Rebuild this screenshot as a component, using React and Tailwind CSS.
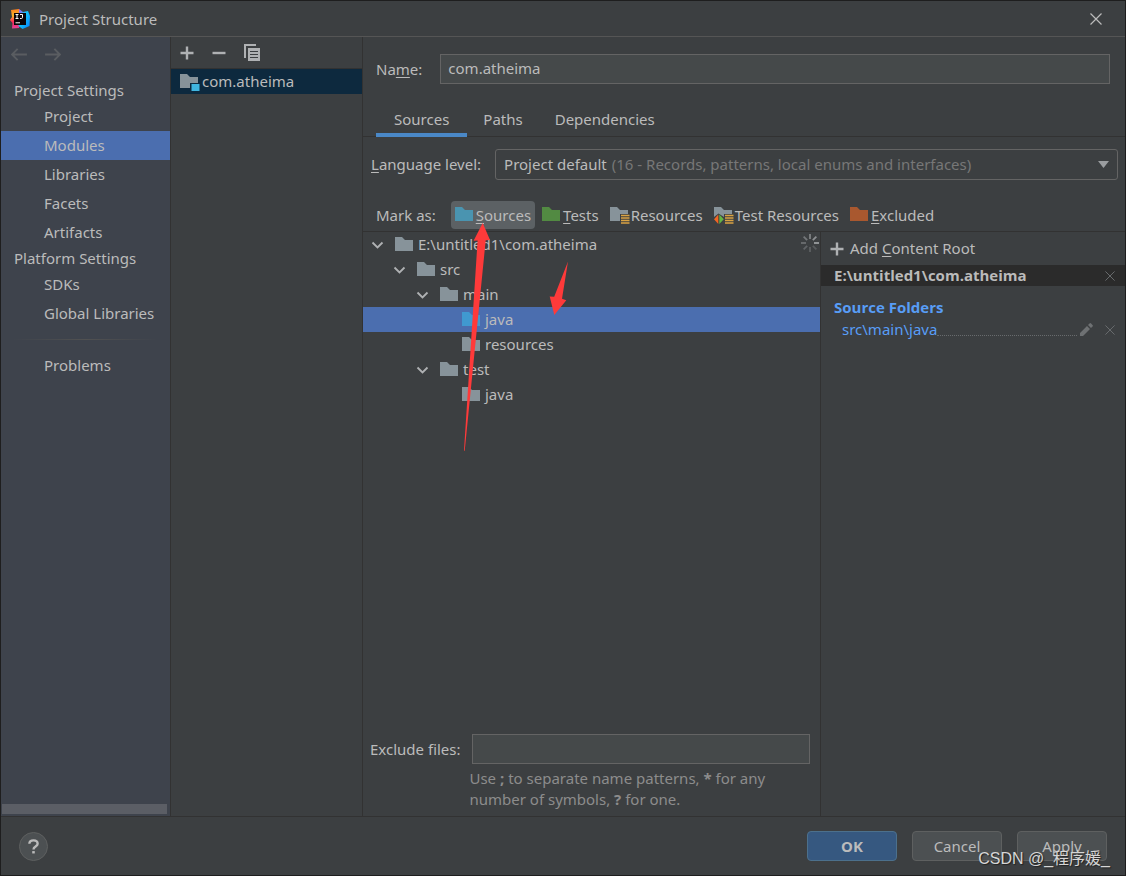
const rows = [
  { depth: 0, label: "E:\\untitled1\\com.atheima", open: true },
  { depth: 1, label: "src", open: true },
  { depth: 2, label: "main", open: true },
  { depth: 3, label: "java", selected: true },
  { depth: 3, label: "resources" },
  { depth: 2, label: "test", open: true },
  { depth: 3, label: "java" },
];

const indents = ["pl-2", "pl-[30px]", "pl-[53px]", "pl-[75px]"];

function Folder({ color = "#87939a", badge }) {
  return (
    <svg width="20" height="18" viewBox="0 0 20 18" className="shrink-0" aria-hidden="true">
      <path d="M0 1h7l3 3h8v11H0z" fill={color} />
      {badge === "module" && (
        <>
          <path d="M10 10h10v8H10z" fill="#0d293e" />
          <path d="M11.500 11h8v7h-8z" fill="#40b6e0" />
        </>
      )}
      {(badge === "resources" || badge === "testResources") && (
        <>
          <path d="M10 8h10v10H10z" fill="#3c3f41" />
          <path d="M11 9.500h8.500M11 12h8.500M11 14.500h8.500M11 17h8.500" stroke="#d9a343" strokeWidth="1.300" />
        </>
      )}
      {badge === "testResources" && (
        <>
          <path d="M0 11 4.500 7.500 10 11v7H0z" fill="#3c3f41" />
          <path d="M4.300 8.500v9.500L0 13.300z" fill="#f26522" />
          <path d="M5.300 8.500v9.500L9.800 13.300z" fill="#62b543" />
        </>
      )}
    </svg>
  );
}

function Plus() {
  return (
    <svg width="14" height="14" viewBox="0 0 14 14" className="shrink-0" aria-hidden="true">
      <path d="M7 .500v13M.500 7h13" stroke="#afb1b3" strokeWidth="2.400" />
    </svg>
  );
}

function Cross({ size = 10, color = "#686b6d" }) {
  return (
    <svg width={size} height={size} viewBox="0 0 12 12" className="shrink-0" aria-hidden="true">
      <path d="M.5.5l11 11M11.500.5l-11 11" stroke={color} strokeWidth="1.200" />
    </svg>
  );
}

function Logo() {
  return (
    <svg width="20" height="20" viewBox="0 0 20 20" aria-hidden="true">
      <defs>
        <linearGradient id="warm" x1="0" y1="0" x2="0" y2="1">
          <stop offset="0" stopColor="#fc801d" />
          <stop offset=".35" stopColor="#fdb62b" />
          <stop offset=".65" stopColor="#fe2857" />
          <stop offset="1" stopColor="#e0409a" />
        </linearGradient>
        <linearGradient id="cool" x1="0" y1="0" x2="1" y2="1">
          <stop offset="0" stopColor="#b74af7" />
          <stop offset=".4" stopColor="#12c8fb" />
          <stop offset="1" stopColor="#087cfa" />
        </linearGradient>
      </defs>
      <path d="M1 1 9 0l3 9-3 10-7 .5L2.500 14 0 11l2-3z" fill="url(#warm)" />
      <path d="M9 0 13 3l5-1 2 5-.5 10-7 3-4-3z" fill="url(#cool)" />
      <path d="M4 4h12v12H4z" fill="#0a0508" />
      <path d="M5.500 5.500h3M7 5.500v4M5.500 9.500h3M10 5.500h2.500V8.500q0 1-1.200 1H10M5.500 13.800h4.500" stroke="#fff" fill="none" />
    </svg>
  );
}

function NavItem({ children, active }) {
  return (
    <a
      href="#"
      aria-current={active ? "page" : undefined}
      className={`flex h-[29px] items-center pl-[43px] ${active ? "bg-[#4b6eaf]" : ""}`}
    >
      {children}
    </a>
  );
}

function MarkButton({ icon, children, active }) {
  return (
    <button type="button" className={`flex h-7 items-center gap-px rounded px-1 whitespace-nowrap ${active ? "bg-[#5c6164]" : ""}`}>
      {icon}
      <span>{children}</span>
    </button>
  );
}

function U({ children }) {
  return <span className="underline decoration-1 underline-offset-2">{children}</span>;
}

function Spinner() {
  const opacities = [0.7, 0.85, 1, 0.3, 0.35, 0.4, 0.5, 0.6];
  return (
    <svg width="18" height="18" viewBox="0 0 18 18" className="shrink-0" aria-hidden="true">
      {opacities.map((o, i) => (
        <path key={i} d="M9 0v5" stroke="#9a9da0" strokeWidth="1.800" opacity={o} transform={`rotate(${i * 45} 9 9)`} />
      ))}
    </svg>
  );
}

export default function App() {
  return (
    <div className="relative flex min-h-screen flex-col border border-[#1e1e1e] bg-[#3c3f41] font-['Noto_Sans','Noto_Sans_CJK_SC',sans-serif] text-[15px] leading-[21px] text-[#bbbbbb]">
      <header className="flex h-9 items-center border-b border-[#555555] pr-[23px] pl-[9px]">
        <Logo />
        <h1 className="flex-1 pt-px pl-[9px]">Project Structure</h1>
        <button type="button" aria-label="Close">
          <Cross size={12} color="#bbbbbb" />
        </button>
      </header>

      <div className="flex flex-1">
        <nav className="flex w-[170px] shrink-0 flex-col border-r border-[#323232] bg-[#3e434c]">
          <div className="flex h-[42px] items-center gap-4 pb-[7px] pl-[10px]">
            {["M17 7H1M7 1 1 7l6 6", "M1 7h16M11 1l6 6-6 6"].map((d, i) => (
              <button key={d} type="button" aria-label={i ? "Forward" : "Back"}>
                <svg width="17" height="13" viewBox="0 0 18 14" aria-hidden="true">
                  <path d={d} fill="none" stroke="#5a5d61" strokeWidth="2" />
                </svg>
              </button>
            ))}
          </div>
          <h2 className="flex h-[23px] items-center pl-[13px]">Project Settings</h2>
          <NavItem>Project</NavItem>
          <NavItem active>Modules</NavItem>
          <NavItem>Libraries</NavItem>
          <NavItem>Facets</NavItem>
          <NavItem>Artifacts</NavItem>
          <h2 className="flex h-[23px] items-center pl-[13px]">Platform Settings</h2>
          <NavItem>SDKs</NavItem>
          <NavItem>Global Libraries</NavItem>
          <div className="mx-3 my-[11px] h-px bg-linear-to-r from-transparent via-[#515151] to-transparent" />
          <NavItem>Problems</NavItem>
          <div className="mt-auto mr-[3px] mb-0.5 ml-px h-[10px] bg-[#5b5e65]" />
        </nav>

        <section className="w-48 shrink-0 border-r border-[#323232]">
          <div className="flex h-8 items-center gap-[18px] border-b border-[#323232] pl-[9px]">
            <button type="button" aria-label="Add"><Plus /></button>
            <button type="button" aria-label="Remove">
              <svg width="14" height="14" viewBox="0 0 14 14" aria-hidden="true">
                <path d="M.500 7h13" stroke="#afb1b3" strokeWidth="2.400" />
              </svg>
            </button>
            <button type="button" aria-label="Copy">
              <svg width="16" height="17" viewBox="0 0 16 17" aria-hidden="true">
                <path d="M1 14V1h11" fill="none" stroke="#afb1b3" strokeWidth="2" />
                <path d="M4 4h12v13H4z" fill="#afb1b3" />
                <path d="M6 7.500h8M6 10.500h8M6 13.500h8" stroke="#3c3f41" strokeWidth="1.200" />
              </svg>
            </button>
          </div>
          <div className="flex h-[25px] items-center gap-0.5 bg-[#0d293e] pl-[9px]">
            <Folder badge="module" />
            <span>com.atheima</span>
          </div>
        </section>

        <main className="flex min-w-0 flex-1 flex-col">
          <div className="flex items-center gap-[18px] pt-[17px] pr-[15px] pl-[13px]">
            <label htmlFor="name">Na<U>m</U>e:</label>
            <input id="name" defaultValue="com.atheima" className="h-[30px] min-w-0 flex-1 border border-[#646464] bg-[#45494a] px-[7px] pb-0.5" />
          </div>

          <div role="tablist" className="mt-[18px] flex h-[35px] border-b border-[#323232] pl-[13px]">
            <button type="button" role="tab" aria-selected="true" className="h-[35px] border-b-4 border-[#4a88c7] px-[18px] pt-[3px]">Sources</button>
            <button type="button" role="tab" aria-selected="false" className="h-[35px] border-b-4 border-transparent px-4 pt-[3px]">Paths</button>
            <button type="button" role="tab" aria-selected="false" className="h-[35px] border-b-4 border-transparent px-4 pt-[3px]">Dependencies</button>
          </div>

          <div className="flex items-center gap-[14px] pt-3 pr-[7px] pl-2">
            <label htmlFor="level"><U>L</U>anguage level:</label>
            <div className="flex h-[31px] min-w-0 flex-1 items-center gap-[5px] rounded-[3px] border border-[#646464] pr-2 pl-2">
              <select id="level" className="field-sizing-content appearance-none bg-transparent">
                <option>Project default</option>
              </select>
              <span className="flex-1 truncate text-[#777777]">(16 - Records, patterns, local enums and interfaces)</span>
              <svg width="11" height="7" viewBox="0 0 11 7" aria-hidden="true"><path d="M0 0h11L5.500 7z" fill="#9a9da0" /></svg>
            </div>
          </div>

          <div className="flex h-[52px] items-end gap-[3px] border-b border-[#323232] pb-0.5 pl-[13px]">
            <span className="mr-3 flex h-7 items-center">Mark as:</span>
            <MarkButton active icon={<Folder color="#4a94b0" />}><U>S</U>ources</MarkButton>
            <MarkButton icon={<Folder color="#528a42" />}><U>T</U>ests</MarkButton>
            <MarkButton icon={<Folder badge="resources" />}>Resources</MarkButton>
            <MarkButton icon={<Folder badge="testResources" />}>Test Resources</MarkButton>
            <MarkButton icon={<Folder color="#a9582f" />}><U>E</U>xcluded</MarkButton>
          </div>

          <div className="flex flex-1">
            <section className="relative flex min-w-0 flex-1 flex-col border-r border-[#323232]">
              <ul role="tree">
                {rows.map((r, i) => (
                  <li
                    key={i}
                    role="treeitem"
                    aria-selected={!!r.selected}
                    className={`flex h-[25px] items-center ${indents[r.depth]} ${r.selected ? "bg-[#4b6eaf]" : ""}`}
                  >
                    <span className="w-6 shrink-0">
                      {r.open && (
                        <svg width="13" height="8" viewBox="0 0 13 8" aria-hidden="true">
                          <path d="M1.500 1.500 6.500 6.500l5-5" fill="none" stroke="#afb1b3" strokeWidth="1.800" />
                        </svg>
                      )}
                    </span>
                    <Folder color={r.selected ? "#4099d0" : undefined} />
                    <span className="pl-[3px]">{r.label}</span>
                  </li>
                ))}
              </ul>
              <div className="absolute top-0.5 right-px"><Spinner /></div>
              <div className="mt-auto grid grid-cols-[auto_1fr] gap-x-3 pr-[10px] pb-1.5 pl-[7px]">
                <label htmlFor="exclude" className="self-center">Exclude files:</label>
                <input id="exclude" className="h-[30px] min-w-0 border border-[#646464] bg-[#45494a] px-[7px]" />
                <p className="col-start-2 -ml-[3px] max-w-[320px] pt-1 text-[#8c8c8c]">
                  Use <b>;</b> to separate name patterns, <b>*</b> for any number of symbols, <b>?</b> for one.
                </p>
              </div>
            </section>

            <aside className="w-[304px] shrink-0">
              <button type="button" className="flex h-[33px] items-center gap-[6px] pl-[9px]">
                <Plus />
                <span>Add <U>C</U>ontent Root</span>
              </button>
              <div className="flex h-[21px] items-center justify-between bg-[#2b2b2b] pr-[10px] pl-[13px]">
                <b className="font-['Open_Sans',sans-serif] font-bold">E:\untitled1\com.atheima</b>
                <button type="button" aria-label="Remove content root"><Cross /></button>
              </div>
              <h3 className="pt-[11px] pl-[13px] font-['Open_Sans',sans-serif] font-bold text-[#589df6]">Source Folders</h3>
              <div className="flex h-[23px] items-center pr-[10px] pl-[21px]">
                <a href="#" className="text-[#589df6]">src\main\java</a>
                <span className="mt-3 flex-1 border-b border-dotted border-[#686b6d]" />
                <button type="button" aria-label="Edit" className="mx-[3px]">
                  <svg width="13" height="13" viewBox="0 0 13 13" aria-hidden="true">
                    <path d="M0 13V10L7 3l3 3-7 7zM8 2l1.500-1.500q.8-.8 1.600 0l1.400 1.400q.8.8 0 1.600L11 5z" fill="#6e7173" />
                  </svg>
                </button>
                <button type="button" aria-label="Remove source folder" className="ml-[9px]"><Cross /></button>
              </div>
            </aside>
          </div>
        </main>
      </div>

      <footer className="flex h-[59px] items-center gap-[15px] border-t border-[#323232] pr-[18px] pl-[18px]">
        <button type="button" aria-label="Help" className="mr-auto flex size-[29px] items-center justify-center rounded-full border border-[#5e6060] bg-[#4c5052]">
          <svg width="11" height="15" viewBox="0 0 12 16" aria-hidden="true">
            <path d="M1.500 5Q1.500 1.300 6 1.300T10.500 5Q10.500 6.500 8.300 8 6 9.500 6 11.300" fill="none" stroke="#bbbbbb" strokeWidth="2.600" />
            <path d="M4.600 13h2.800v2.600H4.600z" fill="#bbbbbb" />
          </svg>
        </button>
        <button type="button" className="h-[30px] w-[90px] rounded border border-[#4c708c] bg-[#365880] font-bold">OK</button>
        <button type="button" className="h-[30px] w-[90px] rounded border border-[#5e6060] bg-[#4c5052]">Cancel</button>
        <button type="button" className="h-[30px] w-[90px] rounded border border-[#5e6060] bg-[#4c5052]">Apply</button>
      </footer>

      <svg width="110" height="232" viewBox="462 221 110 232" className="pointer-events-none absolute top-[220px] left-[461px]" aria-hidden="true">
        <path d="M482.700 223 490 240l-4.300.3L464.700 451l-.7-.5 13.600-210-4 .3z" fill="#fe3a3a" />
        <path d="M568 261.500 562 298.700l4.300 1.500L554.300 315l-4.600-18.500 4.500.2z" fill="#fe3a3a" />
      </svg>
      <div className="pointer-events-none absolute right-[15px] bottom-1 font-['Liberation_Sans','Noto_Sans_CJK_SC',sans-serif] text-base whitespace-nowrap text-[#d6d6d6] text-shadow-[1px_1px_1px_#222222]">
        CSDN @_程序媛_
      </div>
    </div>
  );
}
